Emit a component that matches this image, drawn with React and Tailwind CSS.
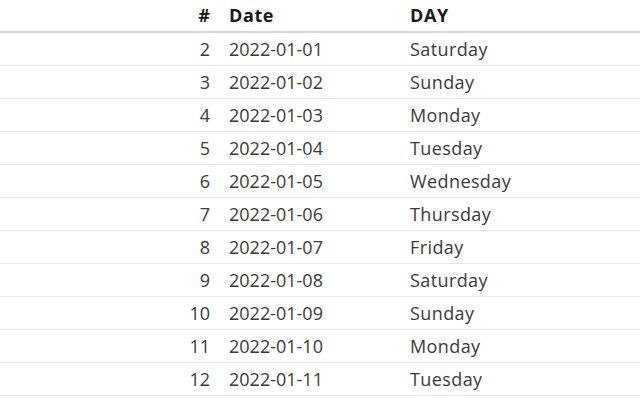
const rows = [
  [2, '2022-01-01', 'Saturday'],
  [3, '2022-01-02', 'Sunday'],
  [4, '2022-01-03', 'Monday'],
  [5, '2022-01-04', 'Tuesday'],
  [6, '2022-01-05', 'Wednesday'],
  [7, '2022-01-06', 'Thursday'],
  [8, '2022-01-07', 'Friday'],
  [9, '2022-01-08', 'Saturday'],
  [10, '2022-01-09', 'Sunday'],
  [11, '2022-01-10', 'Monday'],
  [12, '2022-01-11', 'Tuesday'],
];

export default function App() {
  return (
    <div className="w-[640px] h-[400px] overflow-hidden bg-white font-['Open_Sans',sans-serif] text-[18px]">
      <div className="grid grid-cols-[220px_180px_1fr] h-[33px] items-center border-b-2 border-[#d4d4d4] font-bold text-[#1a1a1a]">
        <div className="text-right pr-[10px]">#</div>
        <div className="pl-[9px] tracking-[0.6px]">Date</div>
        <div className="pl-[10px] tracking-[0.6px]">DAY</div>
      </div>
      {rows.map(([n, date, day]) => (
        <div key={n} className="grid grid-cols-[220px_180px_1fr] h-[33px] items-center pt-[1px] border-b border-[#e6e6e6] text-[#3a3a3a]">
          <div className="text-right pr-[10px]">{n}</div>
          <div className="pl-[9px]">{date}</div>
          <div className="pl-[10px] tracking-[0.4px]">{day}</div>
        </div>
      ))}
    </div>
  );
}
